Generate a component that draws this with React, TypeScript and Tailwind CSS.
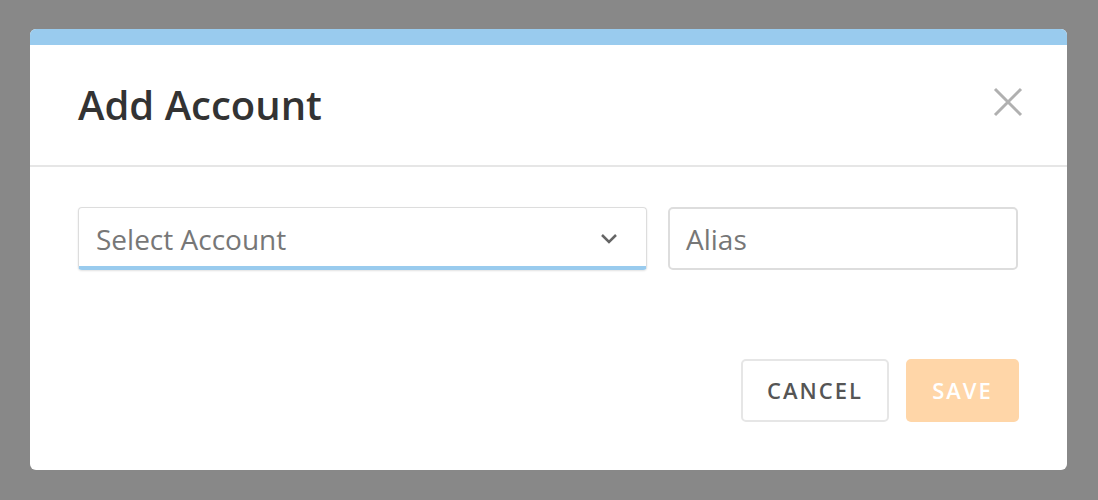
import React from 'react';

const App = () => {
    return (
        <div
            className="h-[500px] w-full bg-[#888888] pt-[29px] pl-[30px] pr-[31px]"
            style={{ fontFamily: '"Open Sans", "Noto Sans", sans-serif' }}
        >
            <div className="w-[1037px] h-[441px] bg-white rounded-[6px] overflow-hidden flex flex-col">
                {/* top stripe */}
                <div className="h-[16px] bg-[#99cbee]"></div>

                {/* Header */}
                <div className="h-[122px] flex items-center justify-between pl-[48px] pr-[39px] border-b-2 border-[#e6e6e6]">
                    <h1 className="text-[40px] font-semibold text-[#333333] leading-none">Add Account</h1>
                    <button className="w-[40px] h-[40px] flex items-center justify-center mb-[6px]">
                        <svg width="30" height="30" viewBox="0 0 30 30" fill="none">
                            <path d="M2 2L28 28M28 2L2 28" stroke="#b0b0b0" strokeWidth="3" />
                        </svg>
                    </button>
                </div>

                {/* Body */}
                <div className="flex-1 flex flex-col px-[48px] pt-[40px]">
                    <div className="flex gap-[21px]">
                        <div className="w-[569px] h-[63px] border border-[#dddddd] border-b-[4px] border-b-[#99cbee] rounded-[4px] flex items-center justify-between pl-[17px] pr-[28px] pt-[3px] shadow-[0_1px_2px_rgba(0,0,0,0.12)]">
                            <span className="text-[28px] text-[#777777] leading-none">Select Account</span>
                            <svg width="18" height="11" viewBox="0 0 18 11" fill="none">
                                <path d="M2 2L9 9L16 2" stroke="#666666" strokeWidth="2.5" />
                            </svg>
                        </div>
                        <div className="w-[350px] h-[63px] border-2 border-[#dddddd] rounded-[5px] flex items-center pl-[16px]">
                            <span className="text-[28px] text-[#777777] leading-none">Alias</span>
                        </div>
                    </div>

                    <div className="flex justify-end gap-[17px] mt-[89px]">
                        <button className="w-[148px] h-[63px] border-2 border-[#e6e6e6] rounded-[5px] text-[22px] font-semibold tracking-[2px] text-[#555555]">
                            CANCEL
                        </button>
                        <button className="w-[113px] h-[63px] bg-[#ffd6a8] rounded-[5px] text-[22px] font-semibold tracking-[2px] text-white">
                            SAVE
                        </button>
                    </div>
                </div>
            </div>
        </div>
    );
};

export default App;
